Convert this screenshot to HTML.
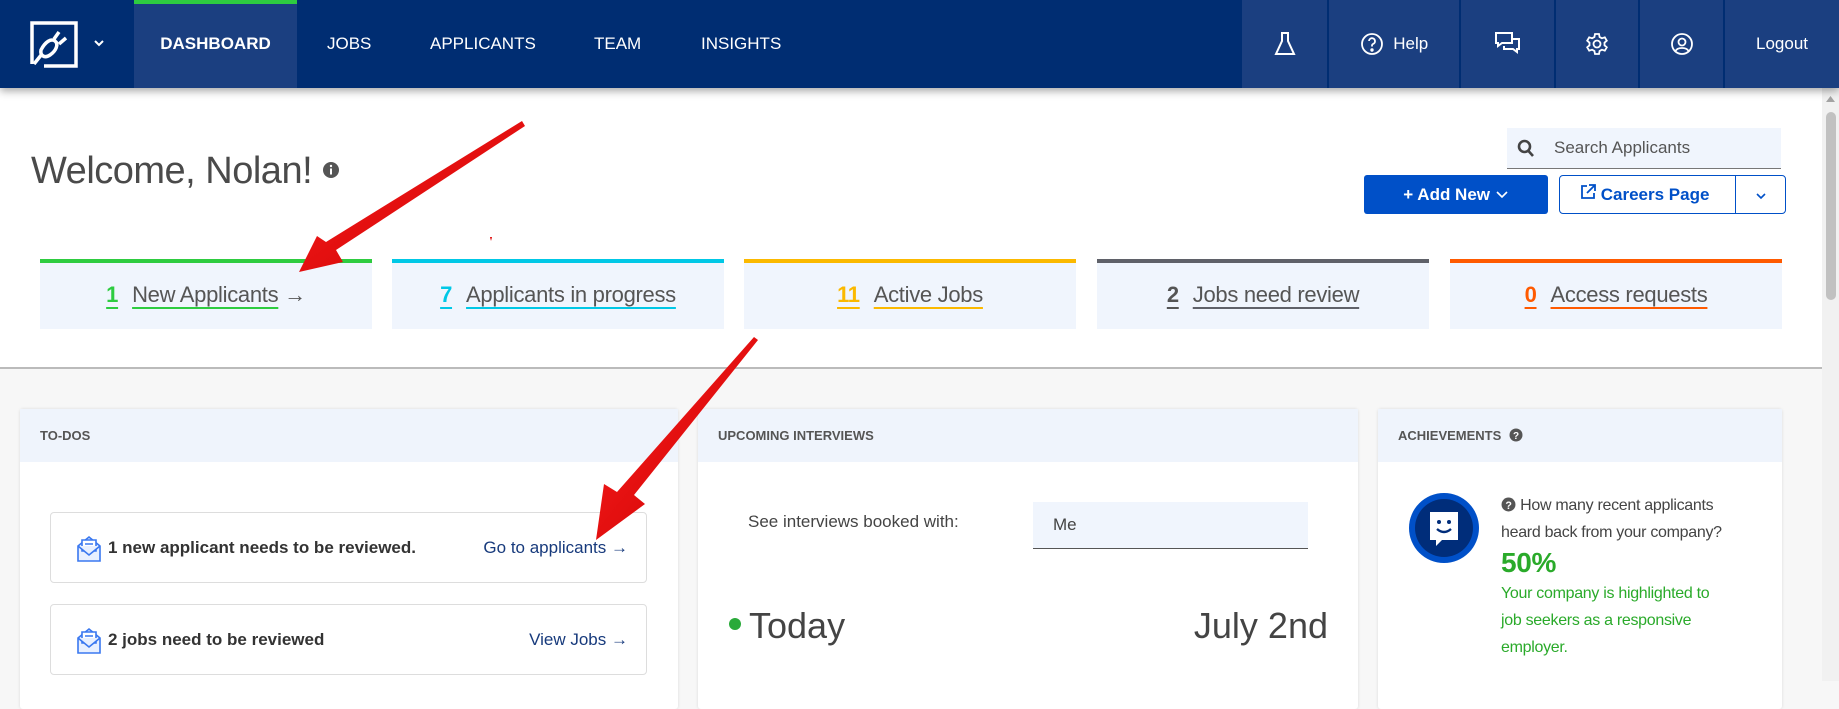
<!DOCTYPE html>
<html><head><meta charset="utf-8"><style>
*{box-sizing:border-box;margin:0;padding:0}
body{width:1839px;height:681px;overflow:hidden;background:#f7f7f7;font-family:"Liberation Sans",sans-serif;position:relative}
.abs{position:absolute}
.nav{left:0;top:0;width:1839px;height:88px;background:#002d72;box-shadow:0 3px 8px rgba(0,0,0,.35);z-index:2}
.nav .it{position:absolute;top:0;height:88px;line-height:88px;color:#fff;font-size:17px}
.dash{left:134px;width:163px;background:#1b3f80;border-top:4px solid #2ecc40;text-align:center;font-weight:bold;line-height:80px!important}
.rb{position:absolute;top:0;height:88px;background:#1b3f80;display:flex;align-items:center;justify-content:center;color:#fff;font-size:17px}
.top{left:0;top:88px;width:1822px;height:281px;background:#fff;border-bottom:2px solid #bbb}
.card{position:absolute;top:259px;width:332px;height:70px;background:#f0f5fd;border-top:4px solid;text-align:center;line-height:64px;font-size:22px;color:#555;letter-spacing:-0.3px}
.card b{font-weight:bold;margin-right:14px}
.card span,.card b{text-decoration:underline;text-decoration-thickness:2px;text-underline-offset:5px}
.panel{position:absolute;top:409px;height:300px;background:#fff;box-shadow:0 0 3px rgba(0,0,0,.12);border-radius:3px}
.ph{height:53px;background:#eff4fc;font-size:13px;font-weight:bold;color:#555;line-height:53px;padding-left:20px}
.todo{position:absolute;left:50px;width:597px;height:71px;border:1px solid #ddd;border-radius:4px;background:#fff;font-size:17px;color:#333;font-weight:bold}
.todo .ic{position:absolute;left:25px;top:22px}
.todo .t{position:absolute;left:57px;top:25px}
.todo .l{position:absolute;right:18px;top:25px;color:#173a7c;font-weight:normal}
</style></head><body>
<div class="abs nav">
 <svg class="abs" style="left:28px;top:20px" width="52" height="50" viewBox="0 0 52 50" fill="none" stroke="#fff" stroke-width="3.5">
  <path d="M4 44V3H48V46H16"/>
  <path d="M13 30c4-8 10-12 14-9s1 10-5 14-10 0-9-5z"/>
  <path d="M26 19l5-7M31 24l7-6M14 34l-8 10"/>
 </svg>
 <svg class="abs" style="left:92px;top:38px" width="14" height="10" viewBox="0 0 14 10" fill="none" stroke="#fff" stroke-width="2"><path d="M3 3l4 4 4-4"/></svg>
 <div class="it dash">DASHBOARD</div>
 <div class="it" style="left:327px">JOBS</div>
 <div class="it" style="left:430px">APPLICANTS</div>
 <div class="it" style="left:594px">TEAM</div>
 <div class="it" style="left:701px">INSIGHTS</div>
 <div class="rb" style="left:1242px;width:85px"><svg width="24" height="26" viewBox="0 0 24 26" fill="none" stroke="#fff" stroke-width="2"><path d="M8 2h8M9 2v8L3 23h18L15 10V2"/></svg></div>
 <div class="rb" style="left:1329px;width:130px"><svg width="24" height="24" viewBox="0 0 24 24" fill="none" stroke="#fff" stroke-width="1.8"><circle cx="12" cy="12" r="10"/><path d="M9 9a3 3 0 1 1 4 3c-1 .5-1 1-1 2.5"/><circle cx="12" cy="18" r=".8" fill="#fff"/></svg>&nbsp;&nbsp;Help</div>
 <div class="rb" style="left:1461px;width:93px"><svg width="28" height="28" viewBox="0 0 28 28" fill="none" stroke="#fff" stroke-width="2"><path d="M2 3h16v10H8l-4 3v-3H2z"/><path d="M18 9h7v10h-2v3l-4-3h-9v-3"/></svg></div>
 <div class="rb" style="left:1556px;width:82px"><svg width="24" height="24" viewBox="0 0 24 24" fill="none" stroke="#fff" stroke-width="1.8"><circle cx="12" cy="12" r="3.5"/><path d="M10 2h4l.6 3 2.3 1.3 2.9-1 2 3.4-2.3 2v2.6l2.3 2-2 3.4-2.9-1-2.3 1.3-.6 3h-4l-.6-3-2.3-1.3-2.9 1-2-3.4 2.3-2v-2.6l-2.3-2 2-3.4 2.9 1L9.4 5z"/></svg></div>
 <div class="rb" style="left:1640px;width:83px"><svg width="24" height="24" viewBox="0 0 24 24" fill="none" stroke="#fff" stroke-width="1.8"><circle cx="12" cy="12" r="10"/><circle cx="12" cy="10" r="3.5"/><path d="M5.5 19c2-4 11-4 13 0"/></svg></div>
 <div class="rb" style="left:1725px;width:114px">Logout</div>
</div>
<div class="abs top"></div>
<div class="abs" style="left:31px;top:150px;font-size:38px;color:#4a4a4a;letter-spacing:-0.5px">Welcome, Nolan! <svg width="18" height="18" viewBox="0 0 18 18" style="vertical-align:4px"><circle cx="9" cy="9" r="8" fill="#555"/><rect x="8" y="7.5" width="2" height="6" fill="#fff"/><circle cx="9" cy="5" r="1.2" fill="#fff"/></svg></div>
<div class="abs" style="left:1507px;top:128px;width:274px;height:41px;background:#f0f5fd;border-bottom:1px solid #777;font-size:17px;color:#555;line-height:40px;padding-left:47px">Search Applicants
 <svg class="abs" style="left:10px;top:11px" width="18" height="19" viewBox="0 0 18 19" fill="none" stroke="#444" stroke-width="2.6"><circle cx="7.5" cy="7.5" r="5.5"/><path d="M11.5 12l4.5 5"/></svg></div>
<div class="abs" style="left:1364px;top:175px;width:184px;height:39px;background:#0050c8;border-radius:3px;color:#fff;font-size:17px;font-weight:bold;line-height:39px;text-align:center">+ Add New <svg width="14" height="10" viewBox="0 0 14 10" fill="none" stroke="#fff" stroke-width="1.6"><path d="M2 2l5 5 5-5"/></svg></div>
<div class="abs" style="left:1559px;top:175px;width:227px;height:39px;border:1px solid #0050c8;border-radius:4px;background:#fff;color:#0050c8;font-size:17px;font-weight:bold;line-height:37px">
 <span style="position:absolute;left:20px"><svg width="16" height="16" viewBox="0 0 16 16" fill="none" stroke="#0050c8" stroke-width="1.8"><path d="M7 2H2v12h12V9M9 1h6v6M15 1L7 9"/></svg> Careers Page</span>
 <span style="position:absolute;left:175px;top:0;height:37px;border-left:1px solid #0050c8;width:50px;text-align:center"><svg width="12" height="8" viewBox="0 0 12 8" fill="none" stroke="#0050c8" stroke-width="1.6"><path d="M2 2l4 4 4-4"/></svg></span></div>

<div class="card" style="left:40px;border-color:#2ecc40"><b style="color:#2ecc40">1</b><span style="text-decoration-color:#2ecc40">New Applicants</span> →</div>
<div class="card" style="left:392px;border-color:#00c8e6"><b style="color:#00c8e6">7</b><span style="text-decoration-color:#00c8e6">Applicants in progress</span></div>
<div class="card" style="left:744px;border-color:#fbb900"><b style="color:#fbb900">11</b><span style="text-decoration-color:#fbb900">Active Jobs</span></div>
<div class="card" style="left:1097px;border-color:#5f6169"><b style="color:#555">2</b><span style="text-decoration-color:#5f6169">Jobs need review</span></div>
<div class="card" style="left:1450px;border-color:#ff5a00"><b style="color:#ff5a00">0</b><span style="text-decoration-color:#ff5a00">Access requests</span></div>

<div class="panel" style="left:20px;width:658px"><div class="ph">TO-DOS</div></div>
<div class="todo" style="top:512px"><svg class="ic" width="26" height="28" viewBox="0 0 26 28" fill="#e8f0ff" stroke="#3a78f0" stroke-width="1.6"><path d="M2 11l11-9 11 9v15H2z"/><path d="M6 5h14v11H6z" fill="#fff"/><path d="M9 9h8M9 12h8"/><path d="M2 11l11 9 11-9"/></svg><span class="t">1 new applicant needs to be reviewed.</span><span class="l">Go to applicants →</span></div>
<div class="todo" style="top:604px"><svg class="ic" width="26" height="28" viewBox="0 0 26 28" fill="#e8f0ff" stroke="#3a78f0" stroke-width="1.6"><path d="M2 11l11-9 11 9v15H2z"/><path d="M6 5h14v11H6z" fill="#fff"/><path d="M9 9h8M9 12h8"/><path d="M2 11l11 9 11-9"/></svg><span class="t">2 jobs need to be reviewed</span><span class="l">View Jobs →</span></div>

<div class="panel" style="left:698px;width:660px"><div class="ph">UPCOMING INTERVIEWS</div>
 <div class="abs" style="left:50px;top:103px;font-size:17px;color:#444">See interviews booked with:</div>
 <div class="abs" style="left:335px;top:93px;width:275px;height:47px;background:#f0f5fd;border-bottom:1px solid #555;font-size:17px;color:#444;line-height:46px;padding-left:20px">Me</div>
 <div class="abs" style="left:31px;top:196px;font-size:36px;color:#444"><span style="display:inline-block;width:12px;height:12px;border-radius:6px;background:#2aaa3a;vertical-align:8px;margin-right:8px"></span>Today</div>
 <div class="abs" style="right:30px;top:196px;font-size:36px;color:#444">July 2nd</div>
</div>

<div class="panel" style="left:1378px;width:404px"><div class="ph">ACHIEVEMENTS <svg width="14" height="14" viewBox="0 0 14 14" style="vertical-align:-2px;margin-left:4px"><circle cx="7" cy="7" r="6.5" fill="#555"/><text x="7" y="11" font-size="10" fill="#fff" text-anchor="middle" font-weight="bold" font-family="Liberation Sans">?</text></svg></div>
 <svg class="abs" style="left:30px;top:83px" width="72" height="72" viewBox="0 0 72 72"><circle cx="36" cy="36" r="35" fill="#0050c8"/><circle cx="36" cy="36" r="29" fill="#002d7a"/><path d="M22 20h28v28H34l-6 6v-6h-6z" fill="#fff"/><circle cx="31" cy="30" r="2" fill="#002d7a"/><circle cx="41" cy="30" r="2" fill="#002d7a"/><path d="M29 37q7 6 14 0" fill="none" stroke="#002d7a" stroke-width="2.4"/></svg>
 <div class="abs" style="left:123px;top:83px;width:255px;font-size:16px;line-height:27px;color:#444;letter-spacing:-0.3px"><svg width="15" height="15" viewBox="0 0 14 14" style="vertical-align:-2px"><circle cx="7" cy="7" r="6.5" fill="#555"/><text x="7" y="11" font-size="10" fill="#fff" text-anchor="middle" font-weight="bold" font-family="Liberation Sans">?</text></svg> How many recent applicants heard back from your company?
 <div style="font-size:28px;font-weight:bold;color:#2aaa2a;line-height:34px">50%</div>
 <div style="color:#2aaa2a;width:232px">Your company is highlighted to job seekers as a responsive employer.</div></div>
</div>

<div class="abs" style="left:1822px;top:88px;width:17px;height:593px;background:#f1f1f1"></div>
<div class="abs" style="left:1826px;top:112px;width:10px;height:188px;background:#c1c1c1;border-radius:5px"></div>
<svg class="abs" style="left:1822px;top:92px" width="17" height="14"><path d="M4 10l4.5-6 4.5 6z" fill="#a3a3a3"/></svg>

<svg class="abs" style="left:0;top:0;z-index:3" width="1839" height="681">
 <defs><linearGradient id="g" x1="0" y1="0" x2="1" y2="1"><stop offset="0" stop-color="#ff2020"/><stop offset="1" stop-color="#c80000"/></linearGradient></defs>
 <polygon points="522,121 525,126 336,250 343,262 299,272 317,236 326,242" fill="url(#g)"/>
 <polygon points="754,337 758,340 634,495 645,504 596,540 604,484 617,492" fill="url(#g)"/>
 <polygon points="490,237 492,237 491,241" fill="#d00"/>
</svg>
</body></html>
